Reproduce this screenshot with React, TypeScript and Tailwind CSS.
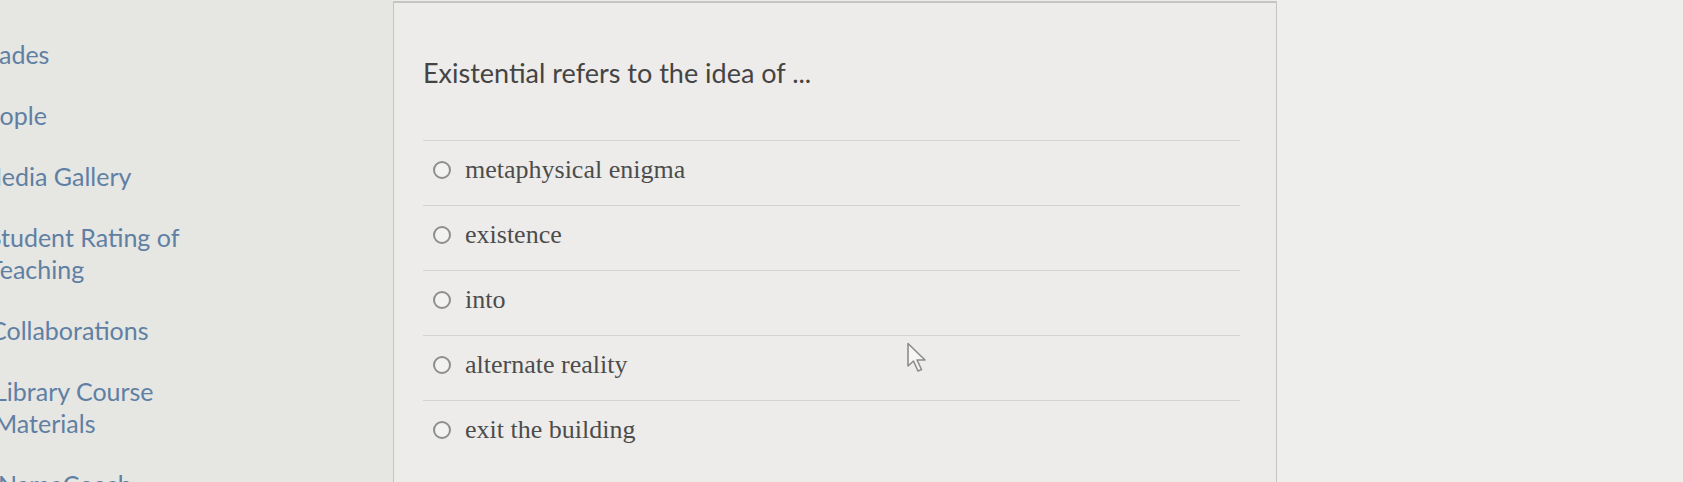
import React from 'react';

const navItems = [
  { label: 'Grades', shift: 'ml-[-28px]' },
  { label: 'People', shift: 'ml-[-28px]' },
  { label: 'Media Gallery', shift: 'ml-[-21px]' },
  { label: 'Student Rating of Teaching', shift: 'ml-[-12px]' },
  { label: 'Collaborations', shift: 'ml-[-10px]' },
  { label: 'Library Course Materials', shift: 'ml-[-6px]' },
  { label: 'NameCoach', shift: 'ml-[-2px]' },
];

const options = ['metaphysical enigma', 'existence', 'into', 'alternate reality', 'exit the building'];

const Cursor = () => (
  <svg className="absolute left-[906px] top-[342px]" width="22" height="31" viewBox="0 0 22 31">
    <path
      d="M2 1.5 L2 24 L7.5 19 L12 29 L15.5 27.5 L11 18 L19 18 Z"
      fill="#f6f6f5"
      stroke="#8c8c8c"
      strokeWidth="1.6"
      strokeLinejoin="round"
    />
  </svg>
);

export default function App() {
  return (
    <div className="relative flex h-[482px] w-[1683px] overflow-hidden bg-[#ececea] font-['Lato','Liberation_Sans',sans-serif]">
      {/* course nav, cut off on the left */}
      <nav className="w-[393px] shrink-0 overflow-hidden bg-[#e6e6e3] pt-[38px]">
        <ul className="flex flex-col gap-[29px]">
          {navItems.map((item) => (
            <li key={item.label} className={`${item.shift} w-[210px] text-[25px] leading-[32px] text-[#5f80a3]`}>
              {item.label}
            </li>
          ))}
        </ul>
      </nav>

      {/* quiz question */}
      <main className="mt-[1px] w-[884px] shrink-0 border-x border-t-2 border-[#c4c4c2] bg-[#edecea] pl-[29px] pr-[36px] pt-[55px]">
        <h2 className="text-[27px] leading-[30px] text-[#444444]">Existential refers to the idea of ...</h2>
        <ul className="mt-[52px] font-['Liberation_Serif',serif]">
          {options.map((opt) => (
            <li key={opt} className="flex h-[65px] items-center gap-[14px] border-t border-[#d3d3d1] pb-[6px] pl-[10px]">
              <span className="h-[18px] w-[18px] shrink-0 rounded-full border-2 border-[#8e8e8c] bg-[#f2f2f0]" />
              <span className="text-[26px] leading-[30px] text-[#4c4c4c]">{opt}</span>
            </li>
          ))}
        </ul>
      </main>

      <div className="flex-1 bg-[#eeeeec]" />
      <Cursor />
    </div>
  );
}
